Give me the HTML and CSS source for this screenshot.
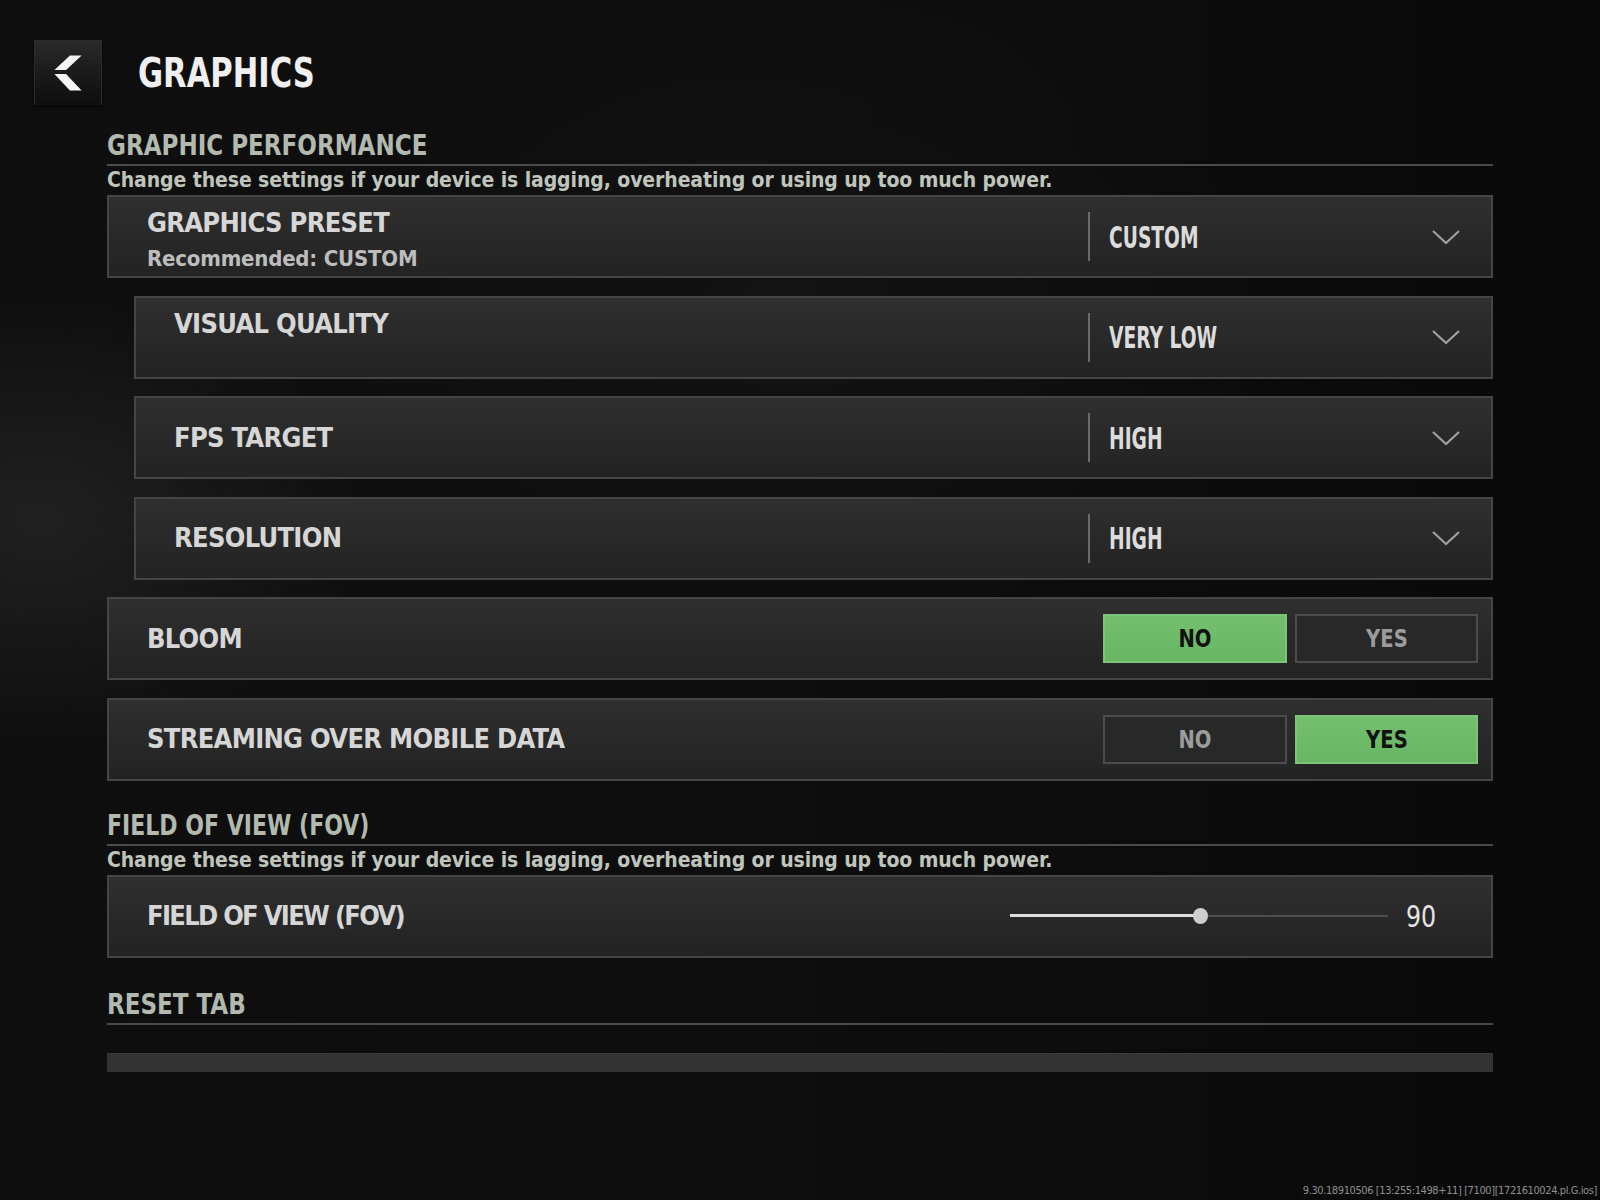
FILE: index.html
```html
<!DOCTYPE html>
<html lang="en">
<head>
<meta charset="utf-8">
<title>Graphics</title>
<link rel="stylesheet" href="styles.css">
</head>
<body>
<div class="screen">
  <header class="topbar">
    <button class="back" aria-label="Back">
      <svg width="68" height="65" viewBox="0 0 68 65">
        <polygon points="36,15 48,15 32,30 20,30" fill="#f4f4f4"/>
        <polygon points="20,34 32,34 48,51 36,51" fill="#f4f4f4"/>
      </svg>
    </button>
    <h1 class="title"><span class="t">GRAPHICS</span></h1>
  </header>

  <main class="content">
    <section class="group">
      <div class="sec-title"><span class="t">GRAPHIC PERFORMANCE</span></div>
      <div class="sec-desc">Change these settings if your device is lagging, overheating or using up too much power.</div>
      <div class="rows">
        <div class="row">
          <div class="row-label top">
            <div class="label">GRAPHICS PRESET</div>
            <div class="sub">Recommended: CUSTOM</div>
          </div>
          <div class="dropdown">
            <span class="value">CUSTOM</span>
            <svg class="chev" width="30" height="18" viewBox="0 0 30 18"><polyline points="2,3 15,15 28,3" fill="none" stroke="#a0a0a0" stroke-width="2.2"/></svg>
          </div>
        </div>
        <div class="row indent">
          <div class="row-label top">
            <div class="label">VISUAL QUALITY</div>
          </div>
          <div class="dropdown">
            <span class="value">VERY LOW</span>
            <svg class="chev" width="30" height="18" viewBox="0 0 30 18"><polyline points="2,3 15,15 28,3" fill="none" stroke="#a0a0a0" stroke-width="2.2"/></svg>
          </div>
        </div>
        <div class="row indent">
          <div class="row-label">
            <div class="label">FPS TARGET</div>
          </div>
          <div class="dropdown">
            <span class="value">HIGH</span>
            <svg class="chev" width="30" height="18" viewBox="0 0 30 18"><polyline points="2,3 15,15 28,3" fill="none" stroke="#a0a0a0" stroke-width="2.2"/></svg>
          </div>
        </div>
        <div class="row indent">
          <div class="row-label">
            <div class="label">RESOLUTION</div>
          </div>
          <div class="dropdown">
            <span class="value">HIGH</span>
            <svg class="chev" width="30" height="18" viewBox="0 0 30 18"><polyline points="2,3 15,15 28,3" fill="none" stroke="#a0a0a0" stroke-width="2.2"/></svg>
          </div>
        </div>
        <div class="row">
          <div class="row-label">
            <div class="label">BLOOM</div>
          </div>
          <div class="toggle">
            <div class="opt on"><span class="ot">NO</span></div>
            <div class="opt"><span class="ot">YES</span></div>
          </div>
        </div>
        <div class="row">
          <div class="row-label">
            <div class="label">STREAMING OVER MOBILE DATA</div>
          </div>
          <div class="toggle">
            <div class="opt"><span class="ot">NO</span></div>
            <div class="opt on"><span class="ot">YES</span></div>
          </div>
        </div>
      </div>
    </section>

    <section class="group fov">
      <div class="sec-title"><span class="t narrow">FIELD OF VIEW (FOV)</span></div>
      <div class="sec-desc">Change these settings if your device is lagging, overheating or using up too much power.</div>
      <div class="rows">
        <div class="row">
          <div class="row-label">
            <div class="label tight">FIELD OF VIEW (FOV)</div>
          </div>
          <div class="slider">
            <div class="track">
              <div class="fill" style="width:190px"></div>
              <div class="thumb" style="left:190px"></div>
            </div>
            <span class="num">90</span>
          </div>
        </div>
      </div>
    </section>

    <section class="group reset">
      <div class="sec-title"><span class="t">RESET TAB</span></div>
      <div class="reset-bar"></div>
    </section>
  </main>

  <div class="build">9.30.18910506 [13:255:1498+11] [7100][1721610024.pl.G.ios]</div>
</div>
</body>
</html>
```

FILE: styles.css
```css
* { box-sizing: border-box; }

html, body {
  margin: 0;
  padding: 0;
}

body {
  width: 1600px;
  height: 1200px;
  overflow: hidden;
  background: #0c0c0c;
  font-family: "DejaVu Sans Condensed", "DejaVu Sans", sans-serif;
  color: #d8d8d8;
}

.screen {
  position: relative;
  width: 1600px;
  height: 1200px;
  background:
    radial-gradient(ellipse 480px 320px at 40px 520px, rgba(255,255,255,0.075), rgba(255,255,255,0) 70%),
    radial-gradient(ellipse 700px 500px at 800px 320px, rgba(255,255,255,0.025), rgba(255,255,255,0) 70%),
    linear-gradient(90deg, #0f0f0f 0%, #0d0d0d 60%, #090909 100%);
}

/* top bar */
.topbar {
  display: flex;
  align-items: center;
  padding: 40px 0 0 34px;
}

.back {
  width: 68px;
  height: 65px;
  padding: 0;
  border: 1px solid #2c2c2c;
  border-bottom-color: #111;
  background: linear-gradient(180deg, #2a2a2a 0%, #1c1c1c 45%, #0e0e0e 100%);
  box-shadow: 0 2px 4px rgba(0,0,0,0.6);
  display: flex;
  align-items: center;
  justify-content: center;
}

.back svg { display: block; }

.title {
  margin: 0 0 0 36px;
  font-size: 40px;
  line-height: 46px;
  font-weight: 700;
  color: #efefef;
}

.t {
  display: inline-block;
  transform-origin: left center;
  white-space: nowrap;
}

.title .t { transform: scaleX(0.85); }

/* content */
.content {
  width: 1386px;
  margin: 25px 0 0 107px;
}

.sec-title {
  height: 36px;
  line-height: 32px;
  font-size: 28px;
  font-weight: 700;
  color: #b2bab0;
  border-bottom: 2px solid #4a4a4a;
}

.sec-title .t { transform: scaleX(0.915); }
.sec-title .t.narrow { transform: scaleX(0.875); }

.sec-desc {
  margin: 2px 0 3px 0;
  line-height: 24px;
  font-size: 21px;
  font-weight: 700;
  letter-spacing: -0.1px;
  color: #bfc5bd;
  white-space: nowrap;
}

.rows {
  display: flex;
  flex-direction: column;
  gap: 17.5px;
}

.row {
  display: flex;
  align-items: stretch;
  height: 83px;
  border: 2px solid #454545;
  background: linear-gradient(180deg, #2f2f2f 0%, #2a2a2a 40%, #232323 100%);
}

.row.indent { margin-left: 27px; }

.row-label {
  flex: 1;
  display: flex;
  flex-direction: column;
  justify-content: center;
  padding-left: 38px;
}

.row-label.top {
  justify-content: flex-start;
  padding-top: 11px;
}

.label {
  font-size: 27px;
  line-height: 30px;
  font-weight: 700;
  letter-spacing: -0.7px;
  color: #d6d6d6;
  white-space: nowrap;
}

.label.tight { letter-spacing: -1.7px; }

.sub {
  margin-top: 8px;
  font-size: 22px;
  line-height: 26px;
  font-weight: 700;
  letter-spacing: -0.2px;
  color: #bdbdbd;
}

/* dropdown */
.dropdown {
  align-self: center;
  width: 403px;
  height: 49px;
  display: flex;
  align-items: center;
  justify-content: space-between;
  border-left: 2px solid #6a6a6a;
  padding: 0 30px 0 19px;
}

.value {
  display: inline-block;
  font-size: 31px;
  line-height: 34px;
  font-weight: 700;
  color: #dcdcdc;
  transform: scaleX(0.67);
  transform-origin: left center;
  white-space: nowrap;
}

.chev { display: block; }

/* toggle */
.toggle {
  display: flex;
  align-items: center;
  gap: 8px;
  padding-right: 13px;
}

.opt {
  width: 184px;
  height: 49px;
  display: flex;
  align-items: center;
  justify-content: center;
  font-size: 25px;
  font-weight: 700;
  color: #9c9c9c;
  border: 2px solid #4c4c4c;
  background: #282828;
}

.ot {
  display: inline-block;
  transform: scaleX(0.87);
}

.opt + .opt { width: 183px; }

.opt.on {
  color: #111;
  border-color: #7cc477;
  background: linear-gradient(180deg, #73bf6d 0%, #68b664 100%);
}

/* slider */
.slider {
  display: flex;
  align-items: center;
  padding-right: 55px;
}

.track {
  position: relative;
  width: 378px;
  height: 2px;
  background: #4e4e4e;
}

.fill {
  position: absolute;
  left: 0;
  top: -1px;
  height: 3px;
  background: #dedede;
}

.thumb {
  position: absolute;
  top: -7px;
  width: 15px;
  height: 16px;
  margin-left: -7px;
  border-radius: 50%;
  background: #cfcfcf;
}

.num {
  display: inline-block;
  width: 30px;
  margin-left: 18px;
  font-size: 31px;
  line-height: 34px;
  font-weight: 400;
  color: #e4e4e4;
  transform: scaleX(0.85);
  transform-origin: left center;
}

/* sections spacing */
.group.fov { margin-top: 29px; }
.group.reset { margin-top: 31px; }

.reset-bar {
  margin-top: 28px;
  height: 19px;
  background: #333;
  border-top: 1px solid #3b3b3b;
}

.build {
  position: absolute;
  right: 3px;
  bottom: 2px;
  font-size: 11px;
  line-height: 14px;
  letter-spacing: -0.4px;
  color: #909090;
}
```
